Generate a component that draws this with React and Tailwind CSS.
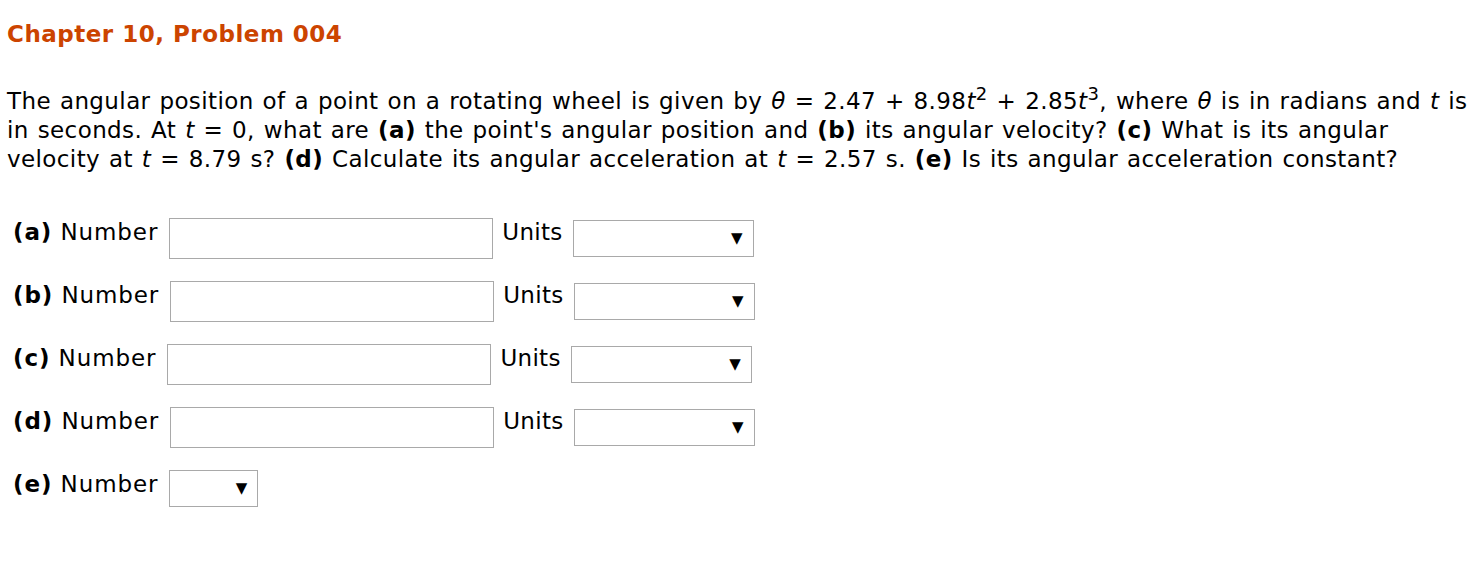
import React from "react";

const Sel = ({ w = "w-[181px]" }) => (
  <div className={`${w} h-[37px] border border-[#a9a9a9] bg-white flex items-center justify-end pr-[10px]`}>
    <span className="text-[15px] leading-none text-black tracking-normal">▼</span>
  </div>
);

const Row = ({ l, units = true, ml = "ml-[11px]" }) => (
  <div className="flex items-start h-[63px]">
    <div className="pt-[1px] whitespace-nowrap">
      <b>({l})</b> Number
    </div>
    {units ? (
      <>
        <div className={`${ml} w-[324px] h-[41px] border border-[#a9a9a9] bg-white`} />
        <div className="ml-[9px] pt-[1px] tracking-[0.3px]">Units</div>
        <div className="ml-[10px] mt-[2px]"><Sel /></div>
      </>
    ) : (
      <div className={`${ml}`}><Sel w="w-[89px]" /></div>
    )}
  </div>
);

export default function App() {
  return (
    <div className="bg-white w-[1479px] h-[575px] text-black" style={{ fontFamily: "Verdana, 'DejaVu Sans', sans-serif" }}>
      <div className="pl-[7px] pt-[18px]">
        <h1 className="text-[23px] font-bold text-[#cc4400] leading-[32px] tracking-[0.5px]">Chapter 10, Problem 004</h1>
        <p className="mt-[37px] text-[23px] leading-[29px] whitespace-nowrap tracking-[0.4px] [word-spacing:1.2px]">
          The angular position of a point on a rotating wheel is given by <i>θ</i> = 2.47 + 8.98<i>t</i><sup className="text-[18px]">2</sup> + 2.85<i>t</i><sup className="text-[18px]">3</sup>, where <i>θ</i> is in radians and <i>t</i> is<br />in seconds. At <i>t</i> = 0, what are <b>(a)</b> the point's angular position and <b>(b)</b> its angular velocity? <b>(c)</b> What is its angular<br />velocity at <i>t</i> = 8.79 s? <b>(d)</b> Calculate its angular acceleration at <i>t</i> = 2.57 s. <b>(e)</b> Is its angular acceleration constant?
        </p>
        <div className="mt-[44px] pl-[6px] text-[23px] leading-[26px] tracking-[0.9px]">
          <Row l="a" />
          <Row l="b" />
          <Row l="c" />
          <Row l="d" />
          <Row l="e" units={false} />
        </div>
      </div>
    </div>
  );
}
